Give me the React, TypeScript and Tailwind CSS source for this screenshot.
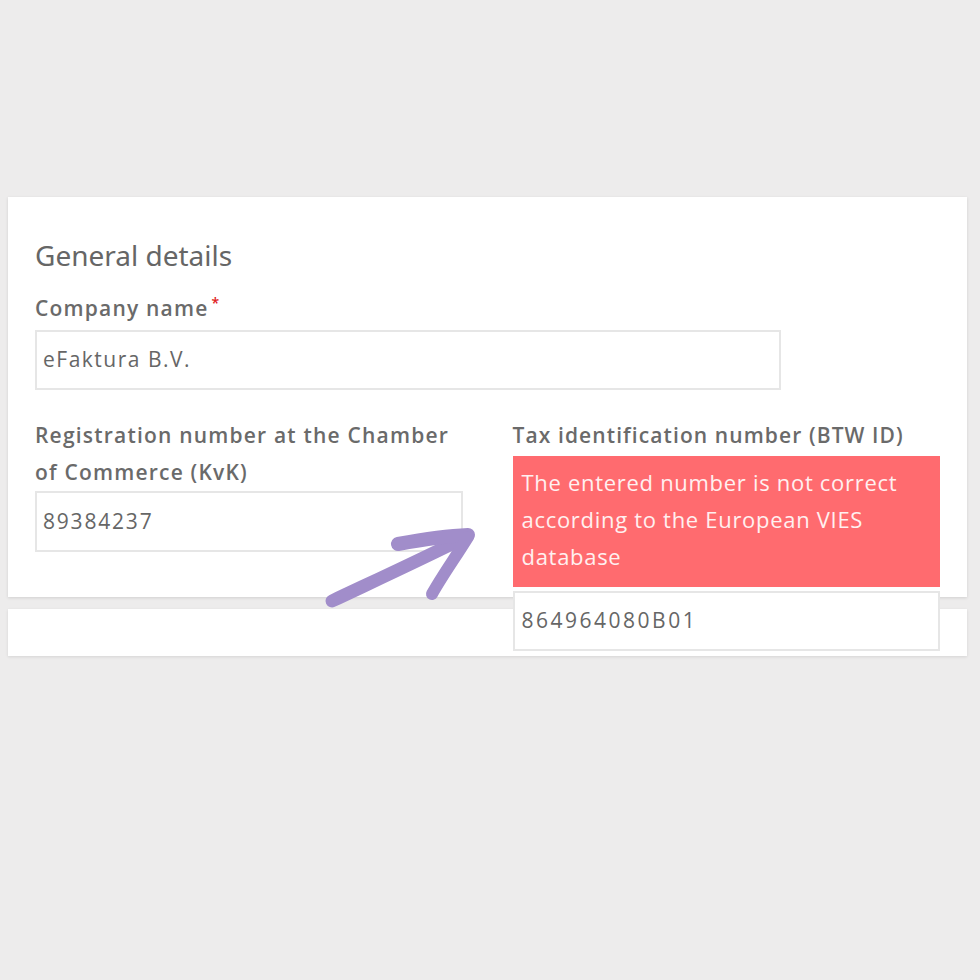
import React from "react";

export default function App() {
  const font = { fontFamily: "'Open Sans', Lato, sans-serif" };
  return (
    <div className="relative h-[980px] w-[980px] bg-[#edecec] pt-[197px] pl-[8px] pr-[13px]" style={font}>
      <div className="relative z-10 h-[400px] bg-white px-[27px] pt-[38px] shadow-[0_1px_3px_rgba(0,0,0,0.12)]">
        <h2 className="text-[28px] leading-[40px] text-[#666666]" style={{ fontFamily: "'Noto Sans', 'Open Sans', sans-serif" }}>
          General details
        </h2>
        <div className="mt-[19px] text-[21px] font-semibold leading-[28px] tracking-[1.2px] text-[#6a6a6a]">
          Company name<span className="relative top-[-8px] ml-[3px] text-[14px] text-[#e02020]">*</span>
        </div>
        <div className="mt-[5px] flex h-[60px] w-[746px] items-center border-2 border-[#e6e6e6] pl-[6px] text-[21px] tracking-[1.5px] text-[#666666]">
          eFaktura B.V.
        </div>
        <div className="mt-[27px] grid grid-cols-2 gap-[50px]">
          <div>
            <div className="text-[21px] font-semibold leading-[37px] tracking-[1.2px] text-[#6a6a6a]">
              Registration number at the Chamber of Commerce (KvK)
            </div>
            <div className="mt-[0px] flex h-[61px] items-center border-2 border-[#e6e6e6] pl-[6px] text-[21px] tracking-[1.8px] text-[#666666]">
              89384237
            </div>
          </div>
          <div>
            <div className="text-[21px] font-semibold leading-[37px] tracking-[1.1px] text-[#6a6a6a]">
              Tax identification number (BTW ID)
            </div>
            <div className="mt-[2px] h-[131px] bg-[#ff6b6f] pl-[9px] pr-[8px] pt-[8px] text-[22px] leading-[37px] tracking-[0.7px] text-[#fff0f0]">
              The entered number is not correct according to the European VIES database
            </div>
            <div className="mt-[4px] flex h-[60px] items-center border-2 border-[#e6e6e6] bg-white pl-[7px] text-[21px] tracking-[2.5px] text-[#666666]">
              864964080B01
            </div>
          </div>
        </div>
      </div>
      <div className="mt-[12px] h-[47px] bg-white shadow-[0_1px_3px_rgba(0,0,0,0.1)]" />
      <svg className="absolute left-0 top-0 z-20" width="980" height="980" viewBox="0 0 980 980" fill="none">
        <g stroke="#a18dca" strokeLinecap="round" strokeLinejoin="round" fill="none">
          <path d="M332 601 C 370 583, 420 560, 466 537" strokeWidth="13" />
          <path d="M398 544 C 420 540, 445 536, 468 535" strokeWidth="14" />
          <path d="M468 537 C 455 558, 442 576, 432 594" strokeWidth="12" />
        </g>
      </svg>
    </div>
  );
}
